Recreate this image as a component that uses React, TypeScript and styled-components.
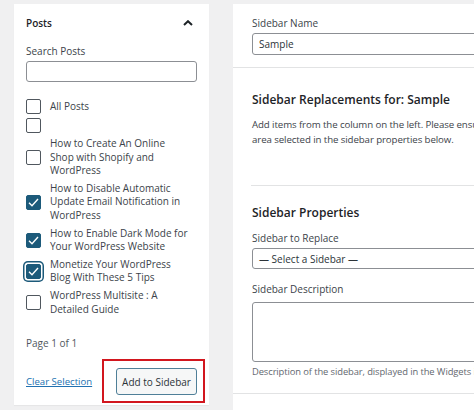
import React from 'react';
import styled, { createGlobalStyle } from 'styled-components';

const GlobalStyle = createGlobalStyle`
  body {
    margin: 0;
    background: #f0f0f1;
    font-family: 'Open Sans', 'Noto Sans', sans-serif;
    color: #3c434a;
  }
`;

const Page = styled.div`
  display: flex;
  align-items: flex-start;
  gap: 24px;
  width: 474px;
  height: 410px;
  padding: 4px 0 0 14px;
  box-sizing: border-box;
  overflow: hidden;
`;

const LeftPanel = styled.div`
  width: 195px;
  flex-shrink: 0;
  box-sizing: border-box;
  padding: 0 12px 2px;
  background: #fff;
  box-shadow: 0 1px 1px rgba(0, 0, 0, 0.04);
`;

const PanelHeader = styled.div`
  display: flex;
  align-items: center;
  justify-content: space-between;
  height: 14px;
  padding: 12px 0 14px;
`;

const PanelTitle = styled.div`
  font-size: 10px;
  font-weight: 600;
  color: #1d2327;
`;

const Chevron = styled.svg`
  width: 10px;
  height: 6px;
  margin-right: 4px;
`;

const Label = styled.div`
  font-size: 10px;
  line-height: 14px;
  color: #3c434a;
`;

const TextInput = styled.div<{ $h?: number }>`
  box-sizing: border-box;
  height: ${(p) => p.$h ?? 21}px;
  margin-top: 3px;
  padding: 0 6px;
  border: 1px solid #8c8f94;
  border-radius: 3px;
  background: #fff;
  font-size: 10px;
  color: #2c3338;
  display: flex;
  align-items: center;
`;

const List = styled.div`
  display: flex;
  flex-direction: column;
  gap: 4px;
  margin-top: 17px;
`;

const Item = styled.div`
  display: flex;
  align-items: center;
  gap: 9px;
  min-height: 15px;
`;

const Box = styled.span<{ $checked?: boolean; $focused?: boolean }>`
  flex-shrink: 0;
  box-sizing: border-box;
  width: 15px;
  height: 15px;
  border: 1.5px solid ${(p) => (p.$checked ? '#1c5a7a' : '#50575e')};
  border-radius: 2px;
  background: ${(p) => (p.$checked ? '#1c5a7a' : '#fff')};
  display: flex;
  align-items: center;
  justify-content: center;
  box-shadow: ${(p) => (p.$focused ? '0 0 0 1.5px #fff, 0 0 0 3px #1c5a7a' : 'none')};
`;

const ItemText = styled.span`
  font-size: 10px;
  line-height: 13.6px;
  color: #3c434a;
  white-space: pre-line;
`;

const PageInfo = styled.div`
  margin-top: 20px;
  font-size: 10px;
  line-height: 14px;
  color: #50575e;
`;

const Footer = styled.div`
  display: flex;
  align-items: center;
  justify-content: space-between;
  margin-top: 9px;
  margin-right: -8px;
`;

const ClearLink = styled.a`
  font-size: 9.6px;
  color: #2271b1;
  text-decoration: underline;
  cursor: pointer;
`;

const Highlight = styled.div`
  border: 2px solid #d2161e;
  padding: 7px 6px 6px 12px;
`;

const SecondaryButton = styled.button`
  width: 81px;
  height: 27px;
  padding: 0;
  border: 1px solid #4f7f98;
  border-radius: 3px;
  background: #f6f7f7;
  font-family: inherit;
  font-size: 10px;
  color: #2c3338;
  cursor: pointer;
`;

const RightPanel = styled.div`
  width: 420px;
  flex-shrink: 0;
  height: 406px;
  background: #fff;
`;

const Section = styled.div<{ $pt: number; $pb: number }>`
  padding: ${(p) => p.$pt}px 18px ${(p) => p.$pb}px 19px;
`;

const Divider = styled.hr<{ $inset?: boolean }>`
  margin: 0 0 0 ${(p) => (p.$inset ? 18 : 0)}px;
  border: 0;
  border-top: 1px solid #e2e3e4;
`;

const Heading = styled.h2`
  margin: 0;
  font-size: 12px;
  line-height: 17px;
  font-weight: 600;
  color: #1d2327;
`;

const Paragraph = styled.p`
  margin: 10px 0 0;
  font-size: 9.7px;
  line-height: 14.5px;
  letter-spacing: -0.1px;
  color: #3c434a;
  white-space: pre-line;
`;

const FieldLabel = styled(Label)<{ $mt: number }>`
  margin-top: ${(p) => p.$mt}px;
`;

const TextArea = styled.div`
  box-sizing: border-box;
  height: 60px;
  margin-top: 6px;
  border: 1px solid #8c8f94;
  border-radius: 3px;
`;

const Hint = styled.div`
  margin-top: 3px;
  font-size: 9.4px;
  line-height: 14px;
  letter-spacing: -0.1px;
  color: #646970;
  white-space: nowrap;
`;

const posts = [
  { title: 'All Posts' },
  { title: '' },
  { title: 'How to Create An Online\nShop with Shopify and\nWordPress' },
  { title: 'How to Disable Automatic\nUpdate Email Notification in\nWordPress', checked: true },
  { title: 'How to Enable Dark Mode for\nYour WordPress Website', checked: true },
  { title: 'Monetize Your WordPress\nBlog With These 5 Tips', checked: true, focused: true },
  { title: 'WordPress Multisite : A\nDetailed Guide' },
];

function Check() {
  return (
    <svg width="11" height="9" viewBox="0 0 11 9">
      <polyline points="1,4.8 4,7.8 10,1" fill="none" stroke="#fff" strokeWidth="1.4" />
    </svg>
  );
}

export default function App() {
  return (
    <>
      <GlobalStyle />
      <Page>
        <LeftPanel>
          <PanelHeader>
            <PanelTitle>Posts</PanelTitle>
            <Chevron viewBox="0 0 10 6">
              <polyline points="1,5 5,1.2 9,5" fill="none" stroke="#1d2327" strokeWidth="2" />
            </Chevron>
          </PanelHeader>
          <Label>Search Posts</Label>
          <TextInput />
          <List>
            {posts.map((post, i) => (
              <Item key={i}>
                <Box $checked={post.checked} $focused={post.focused}>
                  {post.checked && <Check />}
                </Box>
                <ItemText>{post.title}</ItemText>
              </Item>
            ))}
          </List>
          <PageInfo>Page 1 of 1</PageInfo>
          <Footer>
            <ClearLink>Clear Selection</ClearLink>
            <Highlight>
              <SecondaryButton>Add to Sidebar</SecondaryButton>
            </Highlight>
          </Footer>
        </LeftPanel>

        <RightPanel>
          <Section $pt={12} $pb={12}>
            <Label>Sidebar Name</Label>
            <TextInput $h={22}>Sample</TextInput>
          </Section>
          <Divider />
          <Section $pt={23} $pb={38}>
            <Heading>Sidebar Replacements for: Sample</Heading>
            <Paragraph>
              {'Add items from the column on the left. Please ensure that you have a sidebar\narea selected in the sidebar properties below.'}
            </Paragraph>
          </Section>
          <Divider $inset />
          <Section $pt={18} $pb={14}>
            <Heading>Sidebar Properties</Heading>
            <FieldLabel $mt={10}>Sidebar to Replace</FieldLabel>
            <TextInput>— Select a Sidebar —</TextInput>
            <FieldLabel $mt={13}>Sidebar Description</FieldLabel>
            <TextArea />
            <Hint>Description of the sidebar, displayed in the Widgets interface.</Hint>
          </Section>
          <Divider />
        </RightPanel>
      </Page>
    </>
  );
}
